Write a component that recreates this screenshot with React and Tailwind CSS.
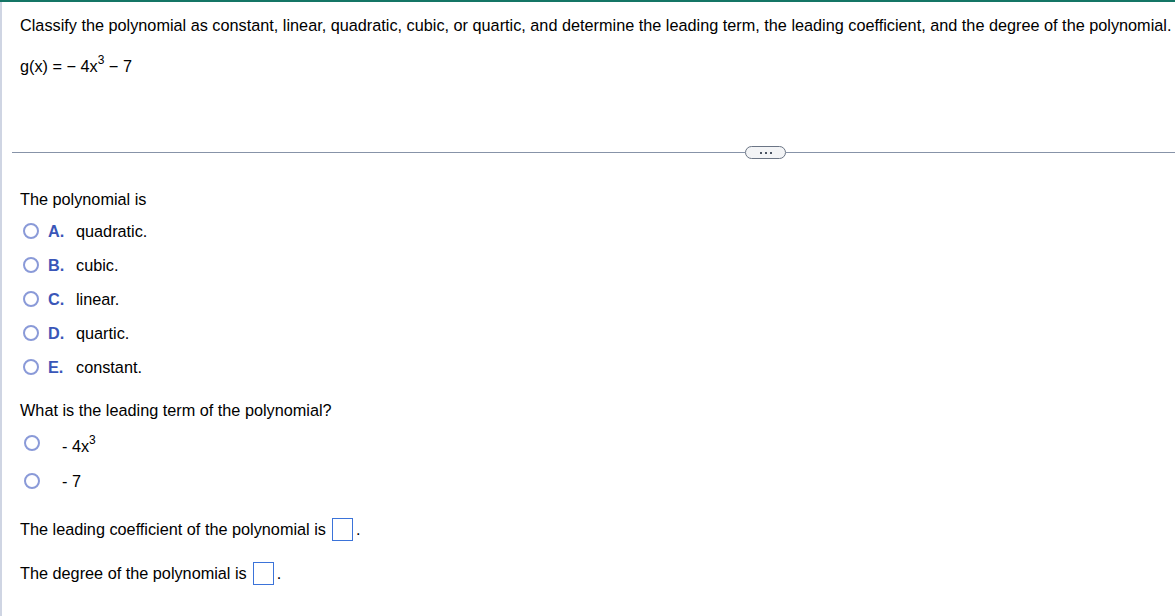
export default function App() {
  const options = [
    ["A.", "quadratic."],
    ["B.", "cubic."],
    ["C.", "linear."],
    ["D.", "quartic."],
    ["E.", "constant."],
  ];

  const Radio = () => (
    <span className="inline-block w-[16px] h-[16px] rounded-full border-2 border-[#8a9ad8] bg-white flex-shrink-0"></span>
  );

  const Box = () => (
    <span className="inline-block w-[21px] h-[23px] border border-[#3b73d9] ml-[6px] mr-[3px]"></span>
  );

  return (
    <div
      className="w-[1175px] h-[616px] overflow-hidden bg-white text-[16.25px] text-black border-t-2 border-[#147565]"
      style={{ fontFamily: '"Liberation Sans", Arial, sans-serif' }}
    >
      <div className="h-full border-l-2 border-[#cfd5e3]">
        <div className="pl-[18px] pt-[14px]">
          <p className="leading-[18px] whitespace-nowrap">
            Classify the polynomial as constant, linear, quadratic, cubic, or quartic, and determine the leading term, the leading coefficient, and the degree of the polynomial.
          </p>
          <p className="mt-[23px] leading-[18px]">
            g(x) = − 4x<sup className="text-[12px] -top-[0.65em]">3</sup> − 7
          </p>
        </div>

        <div className="mt-[71px] ml-[10px] flex items-center">
          <div className="w-[733px] h-px bg-[#8793a8]"></div>
          <div className="w-[41px] h-[13px] rounded-full border border-[#6b7585] bg-[#f3f4f6] flex items-center justify-center gap-[3px]">
            <span className="w-[2px] h-[2px] bg-[#4b5563]"></span>
            <span className="w-[2px] h-[2px] bg-[#4b5563]"></span>
            <span className="w-[2px] h-[2px] bg-[#4b5563]"></span>
          </div>
          <div className="flex-1 h-px bg-[#8793a8]"></div>
        </div>

        <div className="pl-[18px] pt-[31px]">
          <p className="leading-[18px]">The polynomial is</p>
          <div className="mt-[6px] flex flex-col">
            {options.map(([l, t]) => (
              <div key={l} className="flex items-center h-[34px] pl-[3px]">
                <Radio />
                <span className="ml-[9px] w-[28px] font-bold text-[#3a56b8]">{l}</span>
                <span>{t}</span>
              </div>
            ))}
          </div>

          <p className="mt-[17px] leading-[18px]">What is the leading term of the polynomial?</p>
          <div className="flex items-center h-[40px] mt-[4px] pl-[4px]">
            <Radio />
            <span className="ml-[22px] pt-[6px]">
              - 4x<sup className="text-[12px] -top-[0.65em]">3</sup>
            </span>
          </div>
          <div className="flex items-center h-[36px] pl-[4px]">
            <Radio />
            <span className="ml-[22px]">- 7</span>
          </div>

          <p className="mt-[18px] flex items-center h-[24px]">
            The leading coefficient of the polynomial is
            <Box />.
          </p>
          <p className="mt-[20px] flex items-center h-[24px]">
            The degree of the polynomial is
            <Box />.
          </p>
        </div>
      </div>
    </div>
  );
}
